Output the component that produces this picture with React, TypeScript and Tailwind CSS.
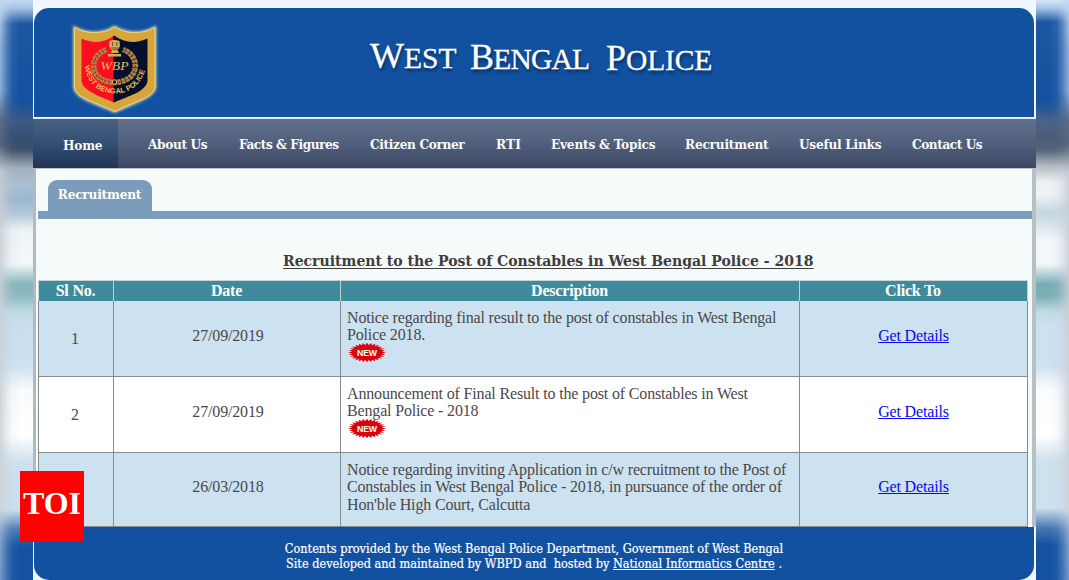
import React from "react";

const serif = "font-['Liberation_Serif',serif]";
const slab = "font-['DejaVu_Serif_Condensed','DejaVu_Serif',serif] [font-stretch:condensed]";

function Emblem() {
  return (
    <svg width="100" height="98" viewBox="65 20 100 98" className="block">
      <defs>
        <path id="name" d="M84.500 65 C87 84 99 93.500 115 93.500 C131 93.500 143 84 146.500 64" />
        <filter id="glow" x="-10%" y="-10%" width="120%" height="120%">
          <feGaussianBlur stdDeviation="1.4" />
        </filter>
        <clipPath id="inner">
          <path d="M81.500 38.500 C93 44 105 43 114 35.500 C124 43 136 44 147.500 38.500 V81 C146 92 128 96 114 102.500 C99 96 83 91 81.500 81 Z" />
        </clipPath>
      </defs>
      <path d="M74.500 27.500 C88 35 104 34 114.500 27 C126 34 141 35 155 27.500 V87 C154 98 132 103 115 111.500 C96 103 75 98 74.500 87 Z" fill="#e8edaf" stroke="#c9d9b5" strokeWidth="2.500" filter="url(#glow)" />
      <path d="M74.500 27.500 C88 35 104 34 114.500 27 C126 34 141 35 155 27.500 V87 C154 98 132 102 115 111.500 C96 102 75 98 74.500 87 Z" fill="#d8a53d" stroke="#ecd47c" strokeWidth="1" />
      <g clipPath="url(#inner)">
        <rect x="80" y="34" width="34" height="70" fill="#fc0e20" />
        <rect x="113.500" y="34" width="35" height="70" fill="#04102b" />
      </g>
      <path d="M106.500 49.500 C90 55 89 76 106 81 Q114.500 84 123 81 C140 76 139 55 123 49.500" fill="none" stroke="#b08346" strokeWidth="5.500" strokeDasharray="3.600 .6" />
      <path d="M106.500 49.500 C90 55 89 76 106 81 Q114.500 84 123 81 C140 76 139 55 123 49.500" fill="none" stroke="#59412f" strokeWidth="1.200" strokeDasharray="1.500 2" />
      <circle cx="114.500" cy="82" r="2.200" fill="#1a1720" stroke="#e0bd6c" />
      <path d="M109.500 41 q5 -2 10 0 l.5 5 -2 3.500 h-7 l-2-3.500z M112 50 h5.500 l1.500 3 h-8z M108 54 h13 v2.500 h-13z" fill="#d5aa5b" />
      <path d="M112.500 42v4 M116.800 42v4 M111 48h7" stroke="#54392a" strokeWidth=".8" />
      <text x="100.500" y="70" fontSize="13" fontStyle="italic" fill="#e9bd70" textLength="28" lengthAdjust="spacingAndGlyphs" className={serif}>WBP</text>
      <text fontSize="7.400" fontWeight="700" fill="#e6bd5b" textLength="86" className="font-['Liberation_Sans',sans-serif]">
        <textPath href="#name" textLength="86" startOffset="1">WEST BENGAL POLICE</textPath>
      </text>
    </svg>
  );
}

function NewBadge() {
  const points = Array.from({ length: 56 }, (_, i) => {
    const a = (i * Math.PI) / 28;
    const k = i % 2 ? 0.78 : 1;
    return `${(19 + 19 * k * Math.cos(a)).toFixed(1)},${(9.5 + 9.8 * k * Math.sin(a)).toFixed(1)}`;
  }).join(" ");
  return (
    <svg width="38" height="19" viewBox="0 0 38 19" className="ml-px block overflow-visible">
      <polygon points={points} fill="#d9040e" />
      <text x="19" y="12.500" textAnchor="middle" textLength="20" lengthAdjust="spacingAndGlyphs" fontSize="8.800" fontWeight="700" fill="#fff" className="font-['Liberation_Sans',sans-serif]">NEW</text>
    </svg>
  );
}

function SideBlur({ right = false }: { right?: boolean }) {
  return (
    <div className={`relative h-[580px] w-[33px] shrink-0 overflow-hidden ${right ? "-scale-x-100" : ""}`}>
      <div
        className={`h-full w-full ${
          right
            ? "bg-[linear-gradient(180deg,#d6e7f9_0,#a9c6e6_8px,#1c56a2_22px,#14509f_100px,#4b6389_122px,#4c5b77_138px,#566379_150px,#b0b6bf_165px,#eef1f4_182px,#eef3f5_195px,#c6d6e1_212px,#cfdde5_220px,#f2f8f9_240px,#f2f8f8_264px,#78adb6_284px,#7cafb8_296px,#bfdbe4_312px,#cde1f0_325px,#cde1f0_365px,#fbfcfd_390px,#fff_435px,#cfe1ee_460px,#cde1f0_508px,#4777b2_528px,#1451a0_545px,#1451a0_580px)]"
            : "bg-[linear-gradient(180deg,#c3daf3_0,#a5c3e5_8px,#1c56a2_24px,#14509f_100px,#3b5982_122px,#354e70_138px,#40516b_150px,#a3afbd_168px,#a9bfd4_185px,#9bb7d2_200px,#b5cadb_215px,#edf4f5_230px,#f2f8f8_264px,#86b5bd_284px,#8cbac1_296px,#bfdae4_312px,#c9dfed_325px,#cde1f0_365px,#f8fafb_390px,#fff_435px,#cfe1ee_462px,#cbdfee_510px,#4777b2_530px,#1451a0_547px,#1451a0_580px)]"
        }`}
      />
      <div className="absolute inset-0 bg-[linear-gradient(180deg,#c3d9f2_0,#9dbce2_50px,#9dbce2_90px,#5f7089_120px,#5b6980_145px,#c6ccd3_172px,#cad2d9_510px,#8facd0_535px,#7ea1ce_580px)] [mask-image:linear-gradient(90deg,rgba(0,0,0,.9)_0,rgba(0,0,0,.45)_6px,rgba(0,0,0,.12)_12px,transparent_20px)]" />
    </div>
  );
}

const nav = [
  { label: "About Us", css: "ml-[30px] w-[91px]" },
  { label: "Facts & Figures", css: "w-[131px] tracking-[-0.46px]" },
  { label: "Citizen Corner", css: "w-[126px]" },
  { label: "RTI", css: "w-[55px] tracking-[0.2px]" },
  { label: "Events & Topics", css: "w-[134px] tracking-[-0.22px]" },
  { label: "Recruitment", css: "w-[114px] tracking-[-0.2px]" },
  { label: "Useful Links", css: "w-[113px] tracking-[-0.25px]" },
  { label: "Contact Us", css: "w-[80px] tracking-[-0.45px]" },
];

const rows = [
  { no: "1", date: "27/09/2019", lines: ["Notice regarding final result to the post of constables in West Bengal", "Police 2018."], isNew: true, css: "h-[76px] bg-[#cde2f0]" },
  { no: "2", date: "27/09/2019", lines: ["Announcement of Final Result to the post of Constables in West", "Bengal Police - 2018"], isNew: true, css: "h-[76px] bg-white" },
  { no: "", date: "26/03/2018", lines: ["Notice regarding inviting Application in c/w recruitment to the Post of", "Constables in West Bengal Police - 2018, in pursuance of the order of", "Hon'ble High Court, Calcutta"], isNew: false, css: "h-[74px] bg-[#cde2f0]" },
];

const cols = "grid grid-cols-[75px_227px_459px_228px]";

export default function App() {
  return (
    <div className={`relative flex h-[580px] w-[1069px] overflow-hidden ${serif}`}>
      <SideBlur />
      <div className="flex w-[1003px] flex-col bg-[#f0f7fe]">
        <header className="mx-px mt-2 flex h-[109px] w-[1000px] rounded-t-[15px] bg-[#12519f]">
          <div className="ml-[31px] mt-3 h-[97px] w-[100px]"><Emblem /></div>
          <div className="ml-[205px] mt-[28px] flex text-[29.5px] leading-10 text-white [text-shadow:1px_3px_3px_#062a5c] [-webkit-text-stroke:0.3px_white]">
            <span className="w-[100px] whitespace-nowrap"><span className="text-[36px]">W</span>EST</span>
            <span className="mt-px w-[136px] whitespace-nowrap tracking-[-0.8px]"><span className="text-[36px]">B</span>ENGAL</span>
            <span className="mt-[2px] whitespace-nowrap tracking-[-0.1px]"><span className="text-[36px]">P</span>OLICE</span>
          </div>
        </header>
        <nav className={`mt-px flex h-[51px] shrink-0 border-b border-t border-b-[#b9c0c8] border-t-[#dce4ea] bg-[linear-gradient(180deg,#62708c,#505f7b_50%,#3c4763)] text-[13.5px] font-bold tracking-[-0.35px] text-[#fafafa] ${slab}`}>
          <div className="flex w-[85px] items-center bg-[linear-gradient(180deg,#48617f,#324f75_50%,#233454)] pl-[30px] pt-[3px] tracking-[-0.2px]">Home</div>
          {nav.map((n) => (
            <div key={n.label} className={`flex shrink-0 items-center whitespace-nowrap pt-px ${n.css}`}>{n.label}</div>
          ))}
        </nav>
        <main className="flex h-[358px] shrink-0 flex-col border-l-[3px] border-r-4 border-l-[#b3babf] border-r-[#b7c0c5] bg-[#f5fbfa]">
          <div className={`ml-[12px] mt-[11px] flex h-[31px] w-[104px] shrink-0 items-center justify-center rounded-t-[9px] bg-[#7b9cba] pb-[2px] pr-px text-[13.5px] font-bold tracking-[-0.2px] text-white ${slab}`}>Recruitment</div>
          <div className="ml-[2px] h-2 shrink-0 bg-[#7b9cba]" />
          <h1 className={`ml-[2px] mt-[31px] h-[30px] shrink-0 whitespace-nowrap pl-[245px] text-[15.6px] font-bold leading-[22px] text-[#413c3d] underline underline-offset-2 ${slab}`}>Recruitment to the Post of Constables in West Bengal Police - 2018</h1>
          <section className="ml-[2px] w-[990px] shrink-0">
            <div className={`${cols} h-[21px] w-[990px] border-l border-t border-[#c9d5d5] bg-[#3f8b9b] text-center text-[16px] font-bold leading-5 tracking-[-0.2px] text-white`}>
              {["Sl No.", "Date", "Description", "Click To"].map((h) => <div key={h} className="border-r border-[#b9d3d6] pr-px">{h}</div>)}
            </div>
            {rows.map((r) => (
              <div key={r.date + r.lines[0]} className={`${cols} border-b border-l border-[#858c90] text-[16px] leading-[17.5px] tracking-[-0.16px] text-[#4a484a] ${r.css}`}>
                <div className="flex items-center justify-center border-r border-[#858c90] pr-[2px]">{r.no}</div>
                <div className="flex items-center justify-center border-r border-[#858c90] pb-[6px] pl-[2px]">{r.date}</div>
                <div className="border-r border-[#858c90] pl-[6px] pt-[7.5px]">
                  {r.lines.map((l) => <div key={l} className="whitespace-nowrap">{l}</div>)}
                  {r.isNew && <div className="-mt-px"><NewBadge /></div>}
                </div>
                <div className="flex items-center justify-center border-r border-[#858c90] pb-[6px] text-[#0909ee] underline">Get Details</div>
              </div>
            ))}
          </section>
        </main>
        <footer className={`ml-px h-[53px] w-[1000px] shrink-0 rounded-b-[15px] bg-[#12519f] pt-[14px] text-center text-[12.6px] leading-[15px] text-white [-webkit-text-stroke:0.2px_white] ${slab}`}>
          <div>Contents provided by the West Bengal Police Department, Government of West Bengal</div>
          <div>Site developed and maintained by WBPD and&nbsp; hosted by <span className="underline">National Informatics Centre</span> .</div>
        </footer>
      </div>
      <SideBlur right />
      <div className="absolute left-[20px] top-[471px] flex h-[71px] w-[64px] items-center justify-center bg-[#fe0000] pb-[7px] text-[32px] font-bold text-white">TOI</div>
    </div>
  );
}
